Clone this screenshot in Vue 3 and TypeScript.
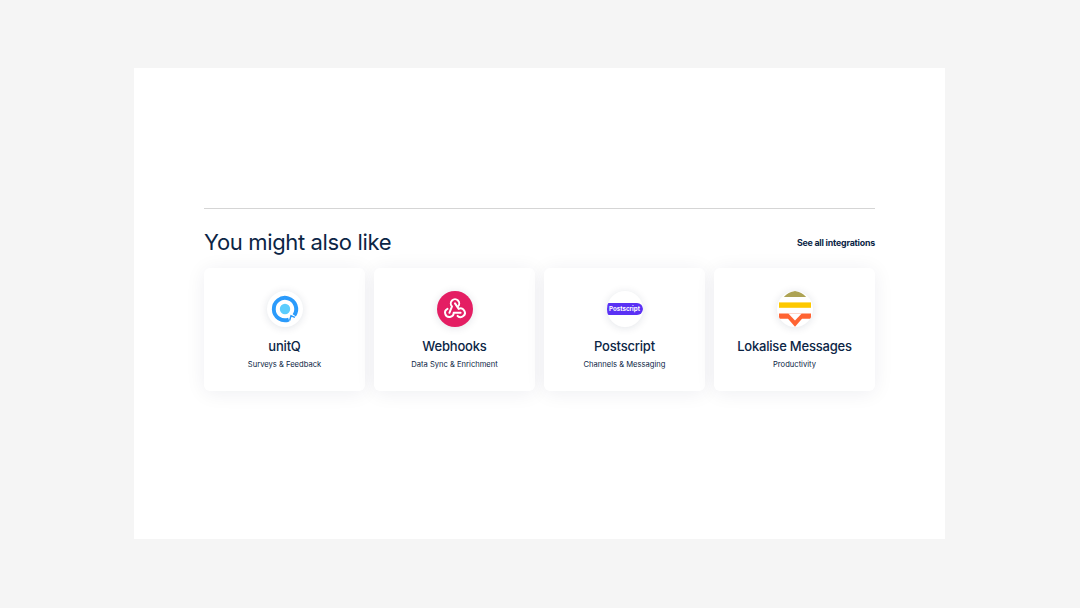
<script setup lang="ts">
type Integration = {
  id: string;
  name: string;
  category: string;
};

const integrations: Integration[] = [
  { id: "unitq", name: "unitQ", category: "Surveys & Feedback" },
  { id: "webhooks", name: "Webhooks", category: "Data Sync & Enrichment" },
  { id: "postscript", name: "Postscript", category: "Channels & Messaging" },
  { id: "lokalise", name: "Lokalise Messages", category: "Productivity" },
];
</script>

<template>
  <div class="page">
    <section class="panel">
      <div class="related">
        <div class="related-head">
          <h2>You might also like</h2>
          <a class="see-all">See all integrations</a>
        </div>
        <div class="cards">
          <div v-for="item in integrations" :key="item.id" class="card">
            <div :class="['logo', `logo-${item.id}`]">
              <svg v-if="item.id === 'unitq'" viewBox="0 0 36 36" width="36" height="36">
                <path
                  d="M21.8 28.6A11.2 11.2 0 1 1 27.3 24.3"
                  fill="none"
                  stroke="#2b9bfb"
                  stroke-width="3.9"
                />
                <path d="M22.6 29.6l1.4-4.8 3.9 1.6" fill="none" stroke="#2b9bfb" stroke-width="1.5" />
                <circle cx="18" cy="18" r="5.2" fill="#5ccdfd" />
              </svg>
              <svg v-else-if="item.id === 'webhooks'" viewBox="0 0 36 36" width="36" height="36">
                <g fill="none" stroke="#fff" stroke-width="2" stroke-linecap="round" stroke-linejoin="round">
                  <path d="M12.4 21.8L15 15.4A4.2 4.2 0 1 1 21 15.4" />
                  <path d="M18 12.4L21.7 17.9A4.3 4.3 0 1 1 20.6 24.9" />
                  <path d="M23.6 21.8H16.7A4.3 4.3 0 1 1 10.5 17.9" />
                </g>
              </svg>
              <span v-else-if="item.id === 'postscript'" class="postscript-badge">Postscript</span>
              <svg v-else viewBox="0 0 36 36" width="36" height="36">
                <path d="M6.8 6h22.4A18 18 0 0 0 18 0 18 18 0 0 0 6.8 6z" fill="#ada354" />
                <rect x="2" y="11.4" width="32" height="5.4" fill="#fdc800" />
                <path d="M2 22.4h32v5.4h-9l-7 8-7-8H2z" fill="#ff6433" />
                <path d="M11.3 22.4h13.4L18 29.5z" fill="#fff" />
              </svg>
            </div>
            <div class="name">{{ item.name }}</div>
            <div class="category">{{ item.category }}</div>
          </div>
        </div>
      </div>
    </section>
  </div>
</template>

<style scoped>
.page {
  height: 608px;
  box-sizing: border-box;
  padding: 68px 135px 69px 134px;
  background: #f5f5f5;
  font-family: "Inter", "Liberation Sans", sans-serif;
  color: #0b2545;
}

.panel {
  height: 100%;
  box-sizing: border-box;
  padding: 140px 70px 0;
  background: #fff;
}

.related {
  border-top: 1px solid #d5d5d5;
}

.related-head {
  display: flex;
  justify-content: space-between;
  align-items: center;
  height: 59px;
  padding-top: 7px;
  box-sizing: border-box;
}

.related-head h2 {
  margin: 0;
  font-size: 22px;
  font-weight: 400;
  letter-spacing: -0.35px;
}

.see-all {
  font-size: 8.8px;
  font-weight: 700;
  letter-spacing: -0.2px;
}

.cards {
  display: grid;
  grid-template-columns: repeat(4, 1fr);
  gap: 9px;
}

.card {
  height: 123px;
  box-sizing: border-box;
  padding-top: 23px;
  display: flex;
  flex-direction: column;
  align-items: center;
  background: #fff;
  border-radius: 6px;
  box-shadow: 0 2px 20px rgba(13, 34, 64, 0.07);
}

.logo {
  width: 36px;
  height: 36px;
  border-radius: 50%;
  overflow: hidden;
  display: flex;
  align-items: center;
  justify-content: center;
  background: #fff;
  box-shadow: 0 1px 8px rgba(13, 34, 64, 0.12);
}

.logo-webhooks {
  background: #e41e63;
}

.postscript-badge {
  flex: none;
  width: 36px;
  height: 12px;
  line-height: 12px;
  border-radius: 2px 6px 6px 2px;
  background: #5a31f4;
  color: #fff;
  font-size: 6.2px;
  font-weight: 700;
  text-align: center;
}

.name {
  margin-top: 10px;
  font-size: 13px;
  line-height: 18px;
  font-weight: 500;
  letter-spacing: -0.2px;
}

.category {
  margin-top: 4px;
  font-size: 7.6px;
  line-height: 12px;
}
</style>

<style>
body {
  margin: 0;
}
</style>
